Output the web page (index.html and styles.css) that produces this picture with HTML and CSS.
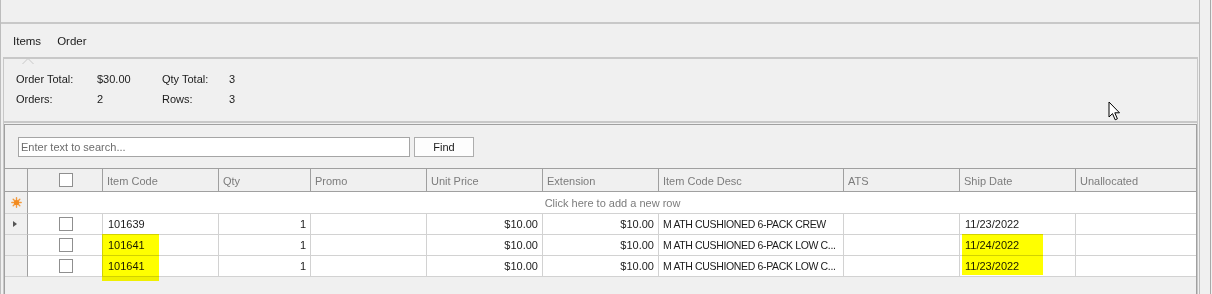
FILE: index.html
```html
<!DOCTYPE html>
<html>
<head>
<meta charset="utf-8">
<link rel="stylesheet" href="styles.css">
</head>
<body>
<div class="screen">
  <div class="main">
    <div class="topbar"></div>
    <div class="tabs">
      <span class="tab active">Items<span class="notch"></span></span>
      <span class="tab">Order</span>
    </div>
    <div class="tabpage">
      <div class="summary">
        <span>Order Total:</span><span>$30.00</span><span>Qty Total:</span><span>3</span>
        <span>Orders:</span><span>2</span><span>Rows:</span><span>3</span>
      </div>
      <div class="grid">
        <div class="findpanel">
          <div class="search">Enter text to search...</div>
          <div class="findbtn">Find</div>
        </div>
        <div class="row head">
          <div class="cell ind"></div>
          <div class="cell chk"><span class="box"></span></div>
          <div class="cell">Item Code</div>
          <div class="cell">Qty</div>
          <div class="cell">Promo</div>
          <div class="cell">Unit Price</div>
          <div class="cell">Extension</div>
          <div class="cell">Item Code Desc</div>
          <div class="cell">ATS</div>
          <div class="cell">Ship Date</div>
          <div class="cell last">Unallocated</div>
        </div>
        <div class="row newrow">
          <div class="cell ind">
            <svg width="11" height="11" viewBox="0 0 11 11" class="star">
              <g stroke="#f39a3d" stroke-width="1.4" stroke-linecap="round">
                <line x1="5.5" y1="0.8" x2="5.5" y2="10.2"/>
                <line x1="0.8" y1="5.5" x2="10.2" y2="5.5"/>
                <line x1="2.2" y1="2.2" x2="8.8" y2="8.8"/>
                <line x1="8.8" y1="2.2" x2="2.2" y2="8.8"/>
              </g>
              <circle cx="5.5" cy="5.5" r="2.6" fill="#f28a1e"/>
            </svg>
          </div>
          <div class="cell newtext">Click here to add a new row</div>
        </div>
        <div class="row data">
          <div class="cell ind"><span class="tri"></span></div>
          <div class="cell chk"><span class="box"></span></div>
          <div class="cell">101639</div>
          <div class="cell num">1</div>
          <div class="cell"></div>
          <div class="cell num">$10.00</div>
          <div class="cell num">$10.00</div>
          <div class="cell desc">M ATH CUSHIONED 6-PACK CREW</div>
          <div class="cell"></div>
          <div class="cell">11/23/2022</div>
          <div class="cell last"></div>
        </div>
        <div class="row data">
          <div class="cell ind"></div>
          <div class="cell chk"><span class="box"></span></div>
          <div class="cell">101641</div>
          <div class="cell num">1</div>
          <div class="cell"></div>
          <div class="cell num">$10.00</div>
          <div class="cell num">$10.00</div>
          <div class="cell desc">M ATH CUSHIONED 6-PACK LOW C...</div>
          <div class="cell"></div>
          <div class="cell">11/24/2022</div>
          <div class="cell last"></div>
        </div>
        <div class="row data">
          <div class="cell ind"></div>
          <div class="cell chk"><span class="box"></span></div>
          <div class="cell">101641</div>
          <div class="cell num">1</div>
          <div class="cell"></div>
          <div class="cell num">$10.00</div>
          <div class="cell num">$10.00</div>
          <div class="cell desc">M ATH CUSHIONED 6-PACK LOW C...</div>
          <div class="cell"></div>
          <div class="cell">11/23/2022</div>
          <div class="cell last"></div>
        </div>
        <div class="empty"></div>
      </div>
    </div>
  </div>
  <div class="strip"></div>
</div>
<div class="hl hl-code"></div>
<div class="hl hl-date"></div>
<svg class="cursor" width="14" height="21" viewBox="0 0 14 21">
  <path d="M1 1 L1 16 L4.5 12.6 L7.2 18.8 L9.4 17.8 L6.8 11.8 L11.5 11.8 Z" fill="#fff" stroke="#000" stroke-width="1" stroke-linejoin="round"/>
</svg>
</body>
</html>
```

FILE: styles.css
```css
* { box-sizing: border-box; }
html, body {
  margin: 0;
  padding: 0;
  width: 1212px;
  height: 294px;
  overflow: hidden;
  background: #f0f0f0;
  font-family: "Liberation Sans", Arial, sans-serif;
  font-size: 11px;
  color: #1b1b1b;
}
.screen {
  display: flex;
  height: 294px;
}
.main {
  width: 1200px;
  border-left: 1px solid #bdbdbd;
  border-right: 1px solid #bdbdbd;
  display: flex;
  flex-direction: column;
}
.topbar {
  height: 24px;
  border-bottom: 2px solid #c8c8c8;
}
.tabs {
  height: 33px;
  display: flex;
  align-items: center;
  padding-left: 12px;
  gap: 16px;
}
.tab {
  position: relative;
  line-height: 14px;
  font-size: 11.5px;
  color: #1b1b1b;
}
.notch {
  position: absolute;
  left: 9px;
  top: 24px;
  width: 0;
  height: 0;
  border-left: 6px solid transparent;
  border-right: 6px solid transparent;
  border-bottom: 6px solid #c8c8c8;
}
.notch::after {
  content: "";
  position: absolute;
  left: -5px;
  top: 1px;
  border-left: 5px solid transparent;
  border-right: 5px solid transparent;
  border-bottom: 5px solid #f0f0f0;
}
.tabpage {
  flex: 1;
  margin-left: 2px;
  margin-right: 1px;
  border-top: 2px solid #c8c8c8;
  border-left: 1px solid #c8c8c8;
  border-right: 1px solid #c8c8c8;
  display: flex;
  flex-direction: column;
}
.summary {
  display: grid;
  grid-template-columns: 81px 65px 67px auto;
  grid-auto-rows: 20px;
  align-items: center;
  padding: 10px 0 12px 12px;
  border-bottom: 2px solid #c8c8c8;
}
.grid {
  flex: 1;
  margin-top: 1px;
  border: 1px solid #a0a0a0;
  border-bottom: none;
  display: flex;
  flex-direction: column;
}
.findpanel {
  display: flex;
  padding: 12px 0 11px 13px;
  gap: 4px;
  background: #f0f0f0;
}
.search {
  width: 392px;
  height: 20px;
  border: 1px solid #a5a5a5;
  background: #fff;
  color: #6d6d6d;
  padding-left: 2px;
  line-height: 18px;
}
.findbtn {
  width: 60px;
  height: 20px;
  border: 1px solid #adadad;
  background: #fdfdfd;
  text-align: center;
  line-height: 18px;
}
.row {
  display: grid;
  grid-template-columns: 23px 75px 116px 92px 116px 116px 116px 185px 116px 116px 1fr;
}
.cell {
  border-right: 1px solid #d2d2d2;
  border-bottom: 1px solid #d2d2d2;
  padding: 0 4px 0 5px;
  white-space: nowrap;
  overflow: hidden;
  display: flex;
  align-items: center;
}
.cell.desc {
  display: block;
  line-height: 20px;
  text-overflow: ellipsis;
  font-size: 10.5px;
  letter-spacing: -0.35px;
  padding-left: 4px;
}
.cell.last { border-right: none; }
.cell.num { justify-content: flex-end; }
.head {
  height: 24px;
  border-top: 1px solid #a0a0a0;
  background: #f0f0f0;
  color: #7c7c7c;
}
.head .cell {
  border-right-color: #a0a0a0;
  border-bottom-color: #a0a0a0;
  padding-left: 4px;
  padding-top: 1px;
}
.cell.ind {
  background: #f0f0f0;
  border-right-color: #a0a0a0;
  justify-content: center;
  padding: 0;
}
.cell.chk {
  justify-content: center;
  padding: 0;
}
.box {
  width: 14px;
  height: 14px;
  border: 1px solid #8f8f8f;
  background: #fff;
}
.head .box { margin-left: 2px; }
.data .box { margin-left: 2px; }
.newrow {
  height: 22px;
  background: #fff;
}
.newrow .cell.ind { border-bottom-color: #d2d2d2; }
.newtext {
  grid-column: 2 / -1;
  border-right: none;
  justify-content: center;
  color: #7c7c7c;
}
.data {
  height: 21px;
  background: #fff;
}
.data .cell.ind { justify-content: flex-start; padding-left: 8px; }
.tri {
  width: 0;
  height: 0;
  border-top: 3.5px solid transparent;
  border-bottom: 3.5px solid transparent;
  border-left: 4px solid #555;
}
.empty {
  flex: 1;
  background: #f0f0f0;
}
.strip {
  width: 11px;
  border-right: 1px solid #a8a8a8;
}
.hl {
  position: absolute;
  background: #ffff00;
  mix-blend-mode: multiply;
}
.hl-code { left: 102px; top: 234px; width: 57px; height: 47px; }
.hl-date { left: 962px; top: 234px; width: 81px; height: 41px; }
.cursor {
  position: absolute;
  left: 1108px;
  top: 101px;
}
```
